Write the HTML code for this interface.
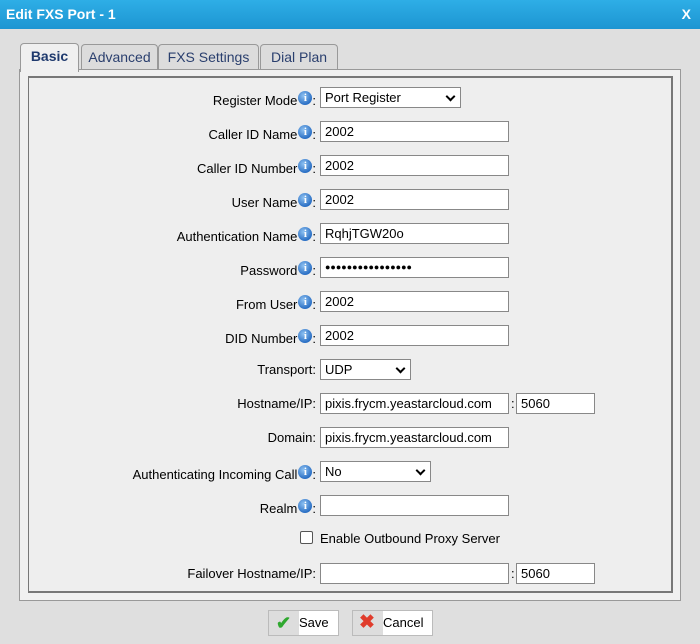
<!DOCTYPE html><html><head><style>
body{margin:0;width:700px;height:644px;background:#dfdfdf;font-family:"Liberation Sans",Arial,sans-serif;font-size:13px;color:#000;position:relative;overflow:hidden}
.t{position:absolute;left:0;top:0;width:700px;height:29px;background:linear-gradient(#2eaee6,#1d95d2);color:#fff;font-weight:bold;font-size:14px}
.t span{position:absolute;left:6px;top:6px}.t b{position:absolute;right:9px;top:6px}
.tab{position:absolute;top:44px;height:25px;border:1px solid #999;border-bottom:none;border-radius:4px 4px 0 0;background:#dcdcdc;color:#2a3f6e;font-size:14px;text-align:center;line-height:24px}
.panel{position:absolute;left:19px;top:69px;width:660px;height:530px;border:1px solid #999;background:#f0f0f0}
.in{position:absolute;left:28px;top:76px;width:642px;height:513px;border:1px solid #777;border-width:2px 2px 2px 1px;background:#eee}
.l{position:absolute;right:384px;white-space:nowrap;font-size:13px}
.i{display:inline-block;width:14px;height:14px;border-radius:50%;background:radial-gradient(circle at 40% 35%,#8fc2f2,#2a6fc4 70%);color:#fff;font-size:11px;font-weight:bold;text-align:center;line-height:14px;vertical-align:4px;margin-left:1px;font-family:"Liberation Serif",serif}
.f{position:absolute;left:320px;height:19px;border:1px solid #888;background:#fff;font-size:13px;line-height:19px;padding-left:4px;box-sizing:content-box}
.s{position:absolute;left:320px;height:19px;border:1px solid #888;background:#fff;font-size:13px;line-height:19px;padding-left:4px}
.s:after{content:"";position:absolute;right:6px;top:5px;width:5px;height:5px;border-right:2px solid #000;border-bottom:2px solid #000;transform:rotate(45deg)}
.btn{position:absolute;top:610px;height:24px;border:1px solid #bbb;background:#fff;font-size:13px;line-height:24px}
.btn .ic{position:absolute;left:0;top:0;width:30px;height:24px;background:#ddd}
</style></head><body>
<div class="t"><span>Edit FXS Port - 1</span><b>X</b></div>
<div class="tab" style="left:81px;width:75px">Advanced</div>
<div class="tab" style="left:158px;width:99px">FXS Settings</div>
<div class="tab" style="left:260px;width:76px">Dial Plan</div>
<div class="panel"></div>
<div class="tab" style="left:20px;top:43px;width:57px;height:28px;background:#f0f0f0;font-weight:bold;color:#1f3a6e">Basic</div>
<div class="in"></div>

<div class="l" style="top:91px">Register Mode<span class="i">i</span>:</div><div class="s" style="top:87px;width:135px">Port Register</div>
<div class="l" style="top:125px">Caller ID Name<span class="i">i</span>:</div><div class="f" style="top:121px;width:183px">2002</div>
<div class="l" style="top:159px">Caller ID Number<span class="i">i</span>:</div><div class="f" style="top:155px;width:183px">2002</div>
<div class="l" style="top:193px">User Name<span class="i">i</span>:</div><div class="f" style="top:189px;width:183px">2002</div>
<div class="l" style="top:227px">Authentication Name<span class="i">i</span>:</div><div class="f" style="top:223px;width:183px">RqhjTGW20o</div>
<div class="l" style="top:261px">Password<span class="i">i</span>:</div><div class="f" style="top:257px;width:183px;font-size:9px">●●●●●●●●●●●●●●●●</div>
<div class="l" style="top:295px">From User<span class="i">i</span>:</div><div class="f" style="top:291px;width:183px">2002</div>
<div class="l" style="top:329px">DID Number<span class="i">i</span>:</div><div class="f" style="top:325px;width:183px">2002</div>
<div class="l" style="top:362px">Transport:</div><div class="s" style="top:359px;width:85px">UDP</div>
<div class="l" style="top:396px">Hostname/IP:</div><div class="f" style="top:393px;width:183px">pixis.frycm.yeastarcloud.com</div>
<div style="position:absolute;left:511px;top:396px">:</div><div class="f" style="left:516px;top:393px;width:73px">5060</div>
<div class="l" style="top:430px">Domain:</div><div class="f" style="top:427px;width:183px">pixis.frycm.yeastarcloud.com</div>
<div class="l" style="top:465px">Authenticating Incoming Call<span class="i">i</span>:</div><div class="s" style="top:461px;width:105px">No</div>
<div class="l" style="top:499px">Realm<span class="i">i</span>:</div><div class="f" style="top:495px;width:183px"></div>
<div style="position:absolute;left:300px;top:531px;width:11px;height:11px;border:1px solid #555;border-radius:2px;background:#fff"></div>
<div style="position:absolute;left:320px;top:531px">Enable Outbound Proxy Server</div>
<div class="l" style="top:566px">Failover Hostname/IP:</div><div class="f" style="top:563px;width:183px"></div>
<div style="position:absolute;left:511px;top:566px">:</div><div class="f" style="left:516px;top:563px;width:73px">5060</div>

<div class="btn" style="left:268px;width:69px"><div class="ic"><span style="position:absolute;left:7px;top:0;color:#2fa82f;font-size:18px;font-weight:bold">✔</span></div><span style="position:absolute;left:30px">Save</span></div>
<div class="btn" style="left:352px;width:79px"><div class="ic"><span style="position:absolute;left:6px;top:0;color:#e03c2c;font-size:19px;font-weight:bold">✖</span></div><span style="position:absolute;left:30px">Cancel</span></div>
</body></html>
